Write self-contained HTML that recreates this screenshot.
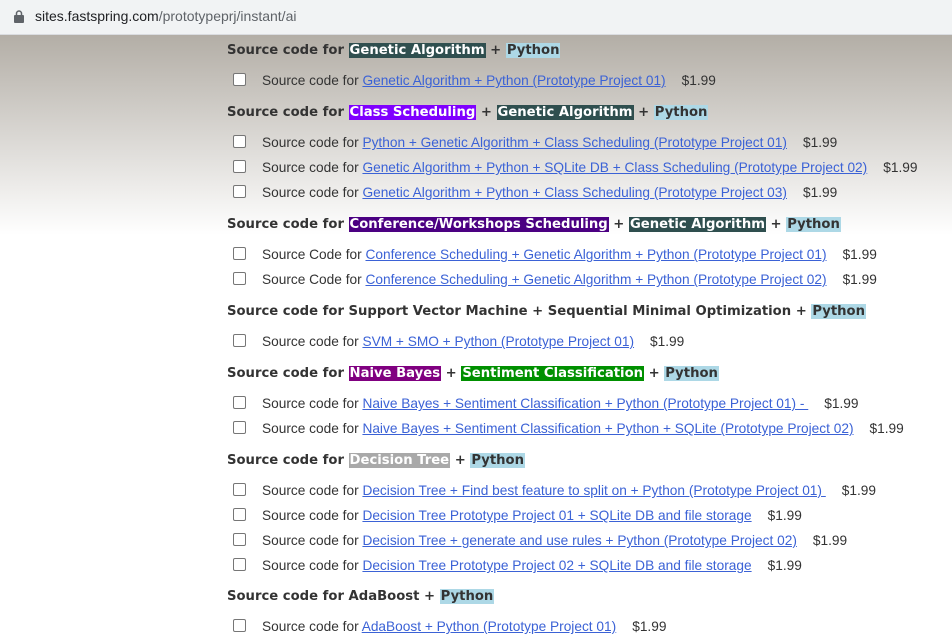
<!DOCTYPE html>
<html><head><meta charset="utf-8"><style>
body{margin:0;width:952px;height:641px;overflow:hidden;position:relative;background:#fff;font-family:"DejaVu Sans",Verdana,sans-serif}
.bar{position:absolute;left:0;top:0;width:952px;height:34px;background:#f1f3f4;border-bottom:1px solid #dadce0}
.url{position:absolute;left:35px;top:8px;font:14px "Liberation Sans",Arial,sans-serif;color:#202124}
.url span{color:#5f6368}
.bg{position:absolute;left:0;top:35px;width:952px;height:200px;background:linear-gradient(#b3aea6,#fff)}
.h{position:absolute;left:227px;font-weight:bold;font-size:13.2px;color:#333;white-space:nowrap;line-height:16px;margin-top:2px}
.h b{padding:0 1px}
.ga{background:#2f4f4f;color:#fff}.py{background:#add8e6;color:#333}
.cs{background:#7f00ff;color:#fff}.cf{background:#4b0082;color:#fff}
.nb{background:#800080;color:#fff}.sc{background:#009000;color:#fff}.dt{background:#a9a9a9;color:#fff}
.i{position:absolute;left:233px;font:13.7px "Liberation Sans",Tahoma,sans-serif;color:#333;white-space:nowrap;line-height:16px;margin-top:1px}
.i i{display:inline-block;width:11px;height:11px;border:1px solid #767676;border-radius:2px;background:#fff;vertical-align:-1px;margin-right:16px}
.i a{color:#3b62d6;text-decoration:underline;margin-right:16px}
</style></head><body>
<div class="bar"><svg style="position:absolute;left:14px;top:10px" width="10" height="13"><rect x="0" y="5" width="10" height="8" rx="1" fill="#5f6368"/><path d="M2.5 5V3.5a2.5 2.5 0 0 1 5 0V5" stroke="#5f6368" stroke-width="1.5" fill="none"/></svg><div class="url">sites.fastspring.com<span>/prototypeprj/instant/ai</span></div></div>
<div class="bg"></div>
<div class="h" style="top:41px">Source code for <b class="ga">Genetic Algorithm</b> + <b class="py">Python</b></div>
<div class="i" style="top:72px"><i></i>Source code for <a>Genetic Algorithm + Python (Prototype Project 01)</a>$1.99</div>
<div class="h" style="top:103px">Source code for <b class="cs">Class Scheduling</b> + <b class="ga">Genetic Algorithm</b> + <b class="py">Python</b></div>
<div class="i" style="top:134px"><i></i>Source code for <a>Python + Genetic Algorithm + Class Scheduling (Prototype Project 01)</a>$1.99</div>
<div class="i" style="top:159px"><i></i>Source code for <a>Genetic Algorithm + Python + SQLite DB + Class Scheduling (Prototype Project 02)</a>$1.99</div>
<div class="i" style="top:184px"><i></i>Source code for <a>Genetic Algorithm + Python + Class Scheduling (Prototype Project 03)</a>$1.99</div>
<div class="h" style="top:215px">Source code for <b class="cf">Conference/Workshops Scheduling</b> + <b class="ga">Genetic Algorithm</b> + <b class="py">Python</b></div>
<div class="i" style="top:246px"><i></i>Source Code for <a>Conference Scheduling + Genetic Algorithm + Python (Prototype Project 01)</a>$1.99</div>
<div class="i" style="top:271px"><i></i>Source Code for <a>Conference Scheduling + Genetic Algorithm + Python (Prototype Project 02)</a>$1.99</div>
<div class="h" style="top:302px">Source code for Support Vector Machine + Sequential Minimal Optimization + <b class="py">Python</b></div>
<div class="i" style="top:333px"><i></i>Source code for <a>SVM + SMO + Python (Prototype Project 01)</a>$1.99</div>
<div class="h" style="top:364px">Source code for <b class="nb">Naive Bayes</b> + <b class="sc">Sentiment Classification</b> + <b class="py">Python</b></div>
<div class="i" style="top:395px"><i></i>Source code for <a>Naive Bayes + Sentiment Classification + Python (Prototype Project 01) - </a>$1.99</div>
<div class="i" style="top:420px"><i></i>Source code for <a>Naive Bayes + Sentiment Classification + Python + SQLite (Prototype Project 02)</a>$1.99</div>
<div class="h" style="top:451px">Source code for <b class="dt">Decision Tree</b> + <b class="py">Python</b></div>
<div class="i" style="top:482px"><i></i>Source code for <a>Decision Tree + Find best feature to split on + Python (Prototype Project 01) </a>$1.99</div>
<div class="i" style="top:507px"><i></i>Source code for <a>Decision Tree Prototype Project 01 + SQLite DB and file storage</a>$1.99</div>
<div class="i" style="top:532px"><i></i>Source code for <a>Decision Tree + generate and use rules + Python (Prototype Project 02)</a>$1.99</div>
<div class="i" style="top:557px"><i></i>Source code for <a>Decision Tree Prototype Project 02 + SQLite DB and file storage</a>$1.99</div>
<div class="h" style="top:587px">Source code for AdaBoost + <b class="py">Python</b></div>
<div class="i" style="top:618px"><i></i>Source code for <a>AdaBoost + Python (Prototype Project 01)</a>$1.99</div>
</body></html>
